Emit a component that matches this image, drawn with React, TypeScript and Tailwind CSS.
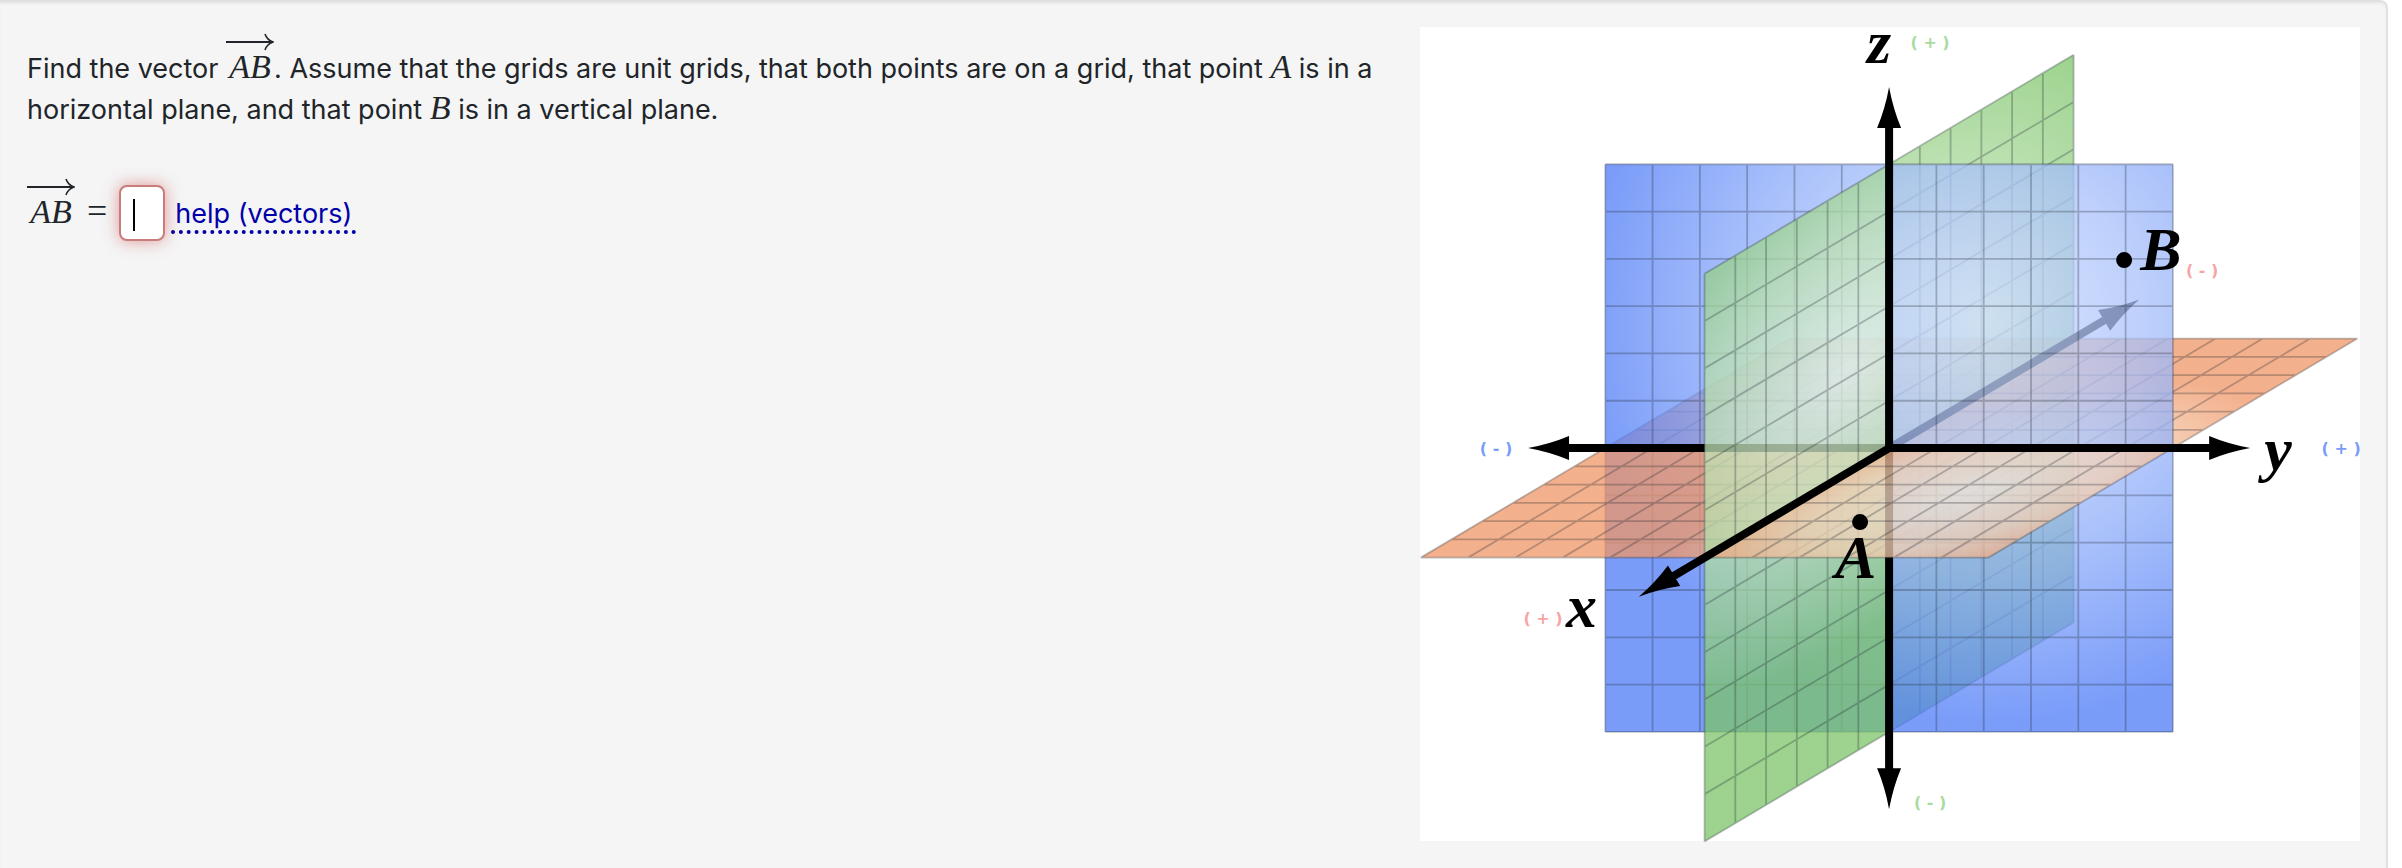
import React from 'react';

const CELL = 47.3;
const DEPTH_X = 30.75;
const DEPTH_Y = 18.25;
const CELLS = 6;

type Vec = [number, number];

// Screen direction of one grid unit along each positive axis
const X: Vec = [-DEPTH_X, DEPTH_Y];
const Y: Vec = [CELL, 0];
const Z: Vec = [0, -CELL];

const neg = (v: Vec): Vec => [-v[0], -v[1]];

interface QuadrantProps {
  u: Vec;
  v: Vec;
  fill: string;
}

const Quadrant: React.FC<QuadrantProps> = ({ u, v, fill }) => {
  const at = (i: number, j: number) => `${u[0] * i + v[0] * j} ${u[1] * i + v[1] * j}`;
  let grid = '';
  for (let i = 1; i <= CELLS; i++) {
    grid += `M${at(i, 0)}L${at(i, CELLS)}M${at(0, i)}L${at(CELLS, i)}`;
  }
  return (
    <g>
      <path
        d={`M0 0L${at(CELLS, 0)}L${at(CELLS, CELLS)}L${at(0, CELLS)}Z`}
        fill={`url(#${fill})`}
        fillOpacity={0.75}
      />
      <path d={grid} fill="none" stroke="#1c2430" strokeOpacity={0.28} strokeWidth={1.8} />
    </g>
  );
};

const Axis: React.FC<{ angle: number; length?: number }> = ({ angle, length = 359 }) => (
  <g transform={`rotate(${angle})`}>
    <path d={`M0 0H${length - 36}`} stroke="#000" strokeWidth={8} />
    <path
      d={`M${length - 39} -12Q${length - 20} -4 ${length + 2} 0Q${length - 20} 4 ${length - 39} 12Z`}
    />
  </g>
);

const Sign: React.FC<{ x: number; y: number; color: string; children: string }> = ({ x, y, color, children }) => (
  <text x={x} y={y + 6} fill={color} textAnchor="middle" className="font-['DejaVu_Sans',sans-serif] text-[16px] font-bold">
    {children}
  </text>
);

const AxesFigure: React.FC = () => (
  <svg
    viewBox="-469 -421 940 814"
    className="block w-full overflow-visible bg-white"
    role="img"
    aria-label="Points A and B on unit grids"
  >
    <defs>
      <radialGradient id="blue" gradientUnits="userSpaceOnUse" cx={95} cy={-125} r={400}>
        <stop offset="0" stopColor="#cfdeff" />
        <stop offset="0.4" stopColor="#a8c0fa" />
        <stop offset="0.62" stopColor="#8aaaf9" />
        <stop offset="1" stopColor="#4e7bf7" />
      </radialGradient>
      <radialGradient
        id="green"
        gradientUnits="userSpaceOnUse"
        cx={0}
        cy={0}
        r={1}
        gradientTransform="matrix(-310 184 0 270 -45 -75)"
      >
        <stop offset="0" stopColor="#e6f4e4" />
        <stop offset="0.5" stopColor="#b8dfac" />
        <stop offset="1" stopColor="#7cc468" />
      </radialGradient>
      <radialGradient
        id="orange"
        gradientUnits="userSpaceOnUse"
        cx={0}
        cy={0}
        r={1}
        gradientTransform="matrix(-221 131 270 0 80 45)"
      >
        <stop offset="0" stopColor="#f2e6d8" />
        <stop offset="0.45" stopColor="#f3cdb0" />
        <stop offset="0.85" stopColor="#ef9666" />
      </radialGradient>
    </defs>

    {/* Quadrants are painted back to front */}
    <Quadrant u={neg(Y)} v={neg(Z)} fill="blue" />
    <Quadrant u={neg(X)} v={neg(Z)} fill="green" />
    <Quadrant u={neg(X)} v={neg(Y)} fill="orange" />

    <Quadrant u={neg(X)} v={Z} fill="green" />
    <Quadrant u={neg(X)} v={Y} fill="orange" />
    <Quadrant u={neg(Y)} v={Z} fill="blue" />
    <Quadrant u={Y} v={neg(Z)} fill="blue" />
    <Quadrant u={X} v={neg(Z)} fill="green" />
    <Quadrant u={X} v={neg(Y)} fill="orange" />

    <Axis angle={180} />
    <Axis angle={90} />
    <Axis angle={-30.7} length={289} />

    <Quadrant u={Y} v={Z} fill="blue" />
    <Quadrant u={X} v={Z} fill="green" />
    <Quadrant u={X} v={Y} fill="orange" />

    <Axis angle={0} />
    <Axis angle={-90} />
    <Axis angle={149.3} length={289} />

    <circle cx={235} cy={-188} r={8} />
    <circle cx={-29} cy={74} r={8} />

    <g className="font-['Liberation_Serif',serif] text-[62px] font-bold italic">
      <text x={-22} y={-385}>z</text>
      <text x={375} y={22}>y</text>
      <text x={-323} y={179}>x</text>
      <text x={-54} y={130}>A</text>
      <text x={251} y={-178}>B</text>
    </g>

    <Sign x={41} y={-406} color="#a8dc9f">( + )</Sign>
    <Sign x={41} y={354} color="#a8dc9f">( - )</Sign>
    <Sign x={313} y={-178} color="#f5a5a5">( - )</Sign>
    <Sign x={-346} y={170} color="#f5a5a5">( + )</Sign>
    <Sign x={452} y={0} color="#7a9cf9">( + )</Sign>
    <Sign x={-393} y={0} color="#7a9cf9">( - )</Sign>
  </svg>
);

const MathText: React.FC<{ children: React.ReactNode }> = ({ children }) => (
  <span className="font-['Liberation_Serif',serif] text-[34px] leading-none italic">{children}</span>
);

const VectorAB: React.FC = () => (
  <span className="relative inline-block w-12 text-center leading-none">
    <svg viewBox="0 0 48 24" className="absolute -top-5 left-0 w-12" fill="none" stroke="currentColor" aria-hidden="true">
      <path d="M0 12H46" strokeWidth={2} />
      <path d="M39 4Q41 10 47 12Q41 14 39 20" strokeWidth={1.6} />
    </svg>
    <MathText>AB</MathText>
  </span>
);

export default function App() {
  return (
    <div className="min-h-screen bg-white pr-3.5">
      <main className="flex min-h-screen items-start rounded-tr-lg border-t-2 border-r-2 border-[#e0e0e0] bg-[#f5f5f5] pt-[25px] pr-[26px] pl-[27px] font-[Inter,sans-serif] text-[27px] leading-[41px] text-[#212529] shadow-[inset_0_2px_2px_rgba(0,0,0,0.05)]">
        <section className="min-w-0 flex-1 pt-[21px] pr-8">
          <p>
            Find the vector <VectorAB />. Assume that the grids are unit grids, that both points are on a grid, that
            point <MathText>A</MathText> is in a horizontal plane, and that point <MathText>B</MathText> is in a
            vertical plane.
          </p>
          <div className="mt-[55px] flex items-baseline">
            <label htmlFor="answer" className="flex items-baseline gap-3">
              <VectorAB />
              <span className="font-['Liberation_Serif',serif] text-[36px] leading-none">=</span>
            </label>
            <span className="relative ml-3">
              <input
                id="answer"
                type="text"
                className="block h-14 w-[46px] rounded-lg border-2 border-[#c97c7c] bg-white px-3 caret-transparent shadow-[0_0_16px_rgba(204,60,60,0.5)] outline-none"
              />
              <span className="pointer-events-none absolute top-3.5 left-3.5 h-8 w-0.5 bg-black" />
            </span>
            <a href="#vectors" className="ml-1.5 border-b-4 border-dotted border-[#0000aa] px-1 leading-8 text-[#0000aa]">
              help (vectors)
            </a>
          </div>
        </section>
        <figure className="w-[40.3%] shrink-0">
          <AxesFigure />
        </figure>
      </main>
    </div>
  );
}
